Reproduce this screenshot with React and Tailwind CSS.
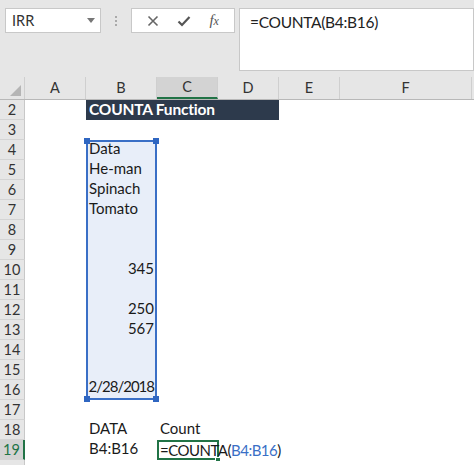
import { Fragment } from "react";

const cols = [
  { key: "A", w: "w-[61px]" },
  { key: "B", w: "w-[71px]" },
  { key: "C", w: "w-[61px]" },
  { key: "D", w: "w-[61px]" },
  { key: "E", w: "w-[61px]" },
  { key: "F", w: "w-[132px]" },
];

const dataB = {
  4: { v: "Data" },
  5: { v: "He-man" },
  6: { v: "Spinach" },
  7: { v: "Tomato" },
  10: { v: "345", right: true },
  12: { v: "250", right: true },
  13: { v: "567", right: true },
  16: { v: "2/28/2018", right: true, tight: true },
};

const rows = Array.from({ length: 19 }, (_, i) => i + 2);

const Handle = ({ pos }) => (
  <span className={`absolute w-[6px] h-[6px] bg-[#2f66c1] ${pos}`} />
);

const BCell = ({ r }) => {
  const inSel = r >= 4 && r <= 16;
  const d = dataB[r];
  if (!inSel) {
    if (r === 18) return <div className="w-[71px] h-full pl-[3px] flex items-end pb-[1px]">DATA</div>;
    if (r === 19) return <div className="w-[71px] h-full pl-[3px] flex items-end pb-[1px]">B4:B16</div>;
    return <div className="w-[71px] h-full" />;
  }
  return (
    <div
      className={`relative w-[71px] h-full bg-[#e8eef9] border-x-2 border-[#3a6fc6] flex items-end pb-[1px] px-[1px] ${
        r === 4 ? "border-t-2" : ""
      } ${r === 16 ? "border-b-2 pb-0" : ""} ${d?.right ? "justify-end" : ""}`}
    >
      {d && <span className={d.tight ? "tracking-[-1px]" : ""}>{d.v}</span>}
      {r === 4 && (
        <>
          <Handle pos="-top-[4px] -left-[4px]" />
          <Handle pos="-top-[4px] -right-[4px]" />
        </>
      )}
      {r === 16 && (
        <>
          <Handle pos="-bottom-[4px] -left-[4px]" />
          <Handle pos="-bottom-[4px] -right-[4px]" />
        </>
      )}
    </div>
  );
};

const CCell = ({ r }) => {
  if (r === 18) return <div className="w-[61px] h-full pl-[3px] flex items-end pb-[1px]">Count</div>;
  if (r === 19)
    return (
      <div className="relative z-10 w-[62px] h-full border-2 border-[#217346] flex items-center pl-[1px] whitespace-nowrap overflow-visible tracking-[-0.5px]">
        <span>=COUNTA(</span>
        <span className="text-[#3a6fc6]">B4:B16</span>
        <span>)</span>
        <span className="inline-block w-[2px] h-[17px] bg-black ml-[1px]" />
        <span className="absolute -bottom-[4px] -right-[4px] w-[6px] h-[5px] bg-[#217346] border border-white" />
      </div>
    );
  return <div className="w-[61px] h-full" />;
};

export default function App() {
  return (
    <div
      className="w-[474px] h-[465px] overflow-hidden bg-[#e6e6e6] text-[15px] text-[#1a1a1a]"
      style={{ fontFamily: "Lato, 'Open Sans', sans-serif" }}
    >
      {/* formula bar */}
      <div className="h-[77px] flex items-start pt-[8px] pl-[5px]">
        <div className="w-[96px] h-[25px] bg-white border border-[#c8c8c8] flex items-center justify-between pl-[6px] pr-[5px] text-[14.5px] text-[#333]">
          <span>IRR</span>
          <span className="w-0 h-0 border-x-[4px] border-x-transparent border-t-[5px] border-t-[#777]" />
        </div>
        <div className="w-[30px] h-[25px] flex flex-col items-center justify-center gap-[2px]">
          <span className="w-[2px] h-[2px] bg-[#aaa]" />
          <span className="w-[2px] h-[2px] bg-[#aaa]" />
          <span className="w-[2px] h-[2px] bg-[#aaa]" />
        </div>
        <div className="w-[104px] h-[25px] bg-white border border-[#c8c8c8] flex items-center justify-around px-[6px]">
          <svg width="12" height="12" viewBox="0 0 12 12">
            <path d="M1.5 1.5 L10.5 10.5 M10.5 1.5 L1.5 10.5" stroke="#666" strokeWidth="1.6" />
          </svg>
          <svg width="14" height="12" viewBox="0 0 14 12">
            <path d="M1.5 6.5 L5 10 L12.5 2" stroke="#555" strokeWidth="2.2" fill="none" />
          </svg>
          <span className="italic text-[15px] text-[#555]" style={{ fontFamily: "'Liberation Serif', serif" }}>
            f<span className="text-[12px]">x</span>
          </span>
        </div>
        <div className="ml-[4px] flex-1 h-[63px] bg-white border border-[#c8c8c8] pl-[10px] pt-[2px] text-[15.5px] text-[#222] tracking-[-0.3px]">
          =COUNTA(B4:B16)
        </div>
      </div>

      {/* column headers */}
      <div className="flex h-[23px] bg-[#e6e6e6] border-b border-[#b8b8b8] text-[14.5px] text-[#333]">
        <div className="w-[25px] h-full flex items-end justify-end pr-[3px] pb-[3px] border-r border-[#cfcfcf]">
          <span className="w-0 h-0 border-l-[11px] border-l-transparent border-b-[11px] border-b-[#b5b5b5]" />
        </div>
        {cols.map((c) => (
          <div
            key={c.key}
            className={`${c.w} h-full flex items-center justify-center border-r border-[#cfcfcf] ${
              c.key === "C" ? "bg-[#d3d3d3] border-b-2 border-b-[#217346]" : ""
            }`}
          >
            {c.key}
          </div>
        ))}
      </div>

      {/* rows */}
      <div className="bg-white">
        {rows.map((r) => (
          <div key={r} className="flex h-[20px]">
            <div
              className={`w-[25px] h-full flex items-center justify-center text-[14.5px] border-b border-[#d4d4d4] ${
                r === 19
                  ? "bg-[#d3d3d3] text-[#217346] border-r-2 border-r-[#217346]"
                  : "bg-[#e6e6e6] text-[#333] border-r border-r-[#c8c8c8]"
              }`}
            >
              {r < 20 ? r : ""}
            </div>
            <div className="w-[61px] h-full" />
            {r === 2 ? (
              <div className="w-[193px] h-full bg-[#2d3a4c] text-white font-bold pl-[3px] flex items-center text-[15.5px] tracking-[-0.2px]">
                COUNTA Function
              </div>
            ) : (
              <Fragment>
                <BCell r={r} />
                <CCell r={r} />
                <div className="w-[61px] h-full" />
              </Fragment>
            )}
            <div className="flex-1 h-full" />
          </div>
        ))}
      </div>
    </div>
  );
}
